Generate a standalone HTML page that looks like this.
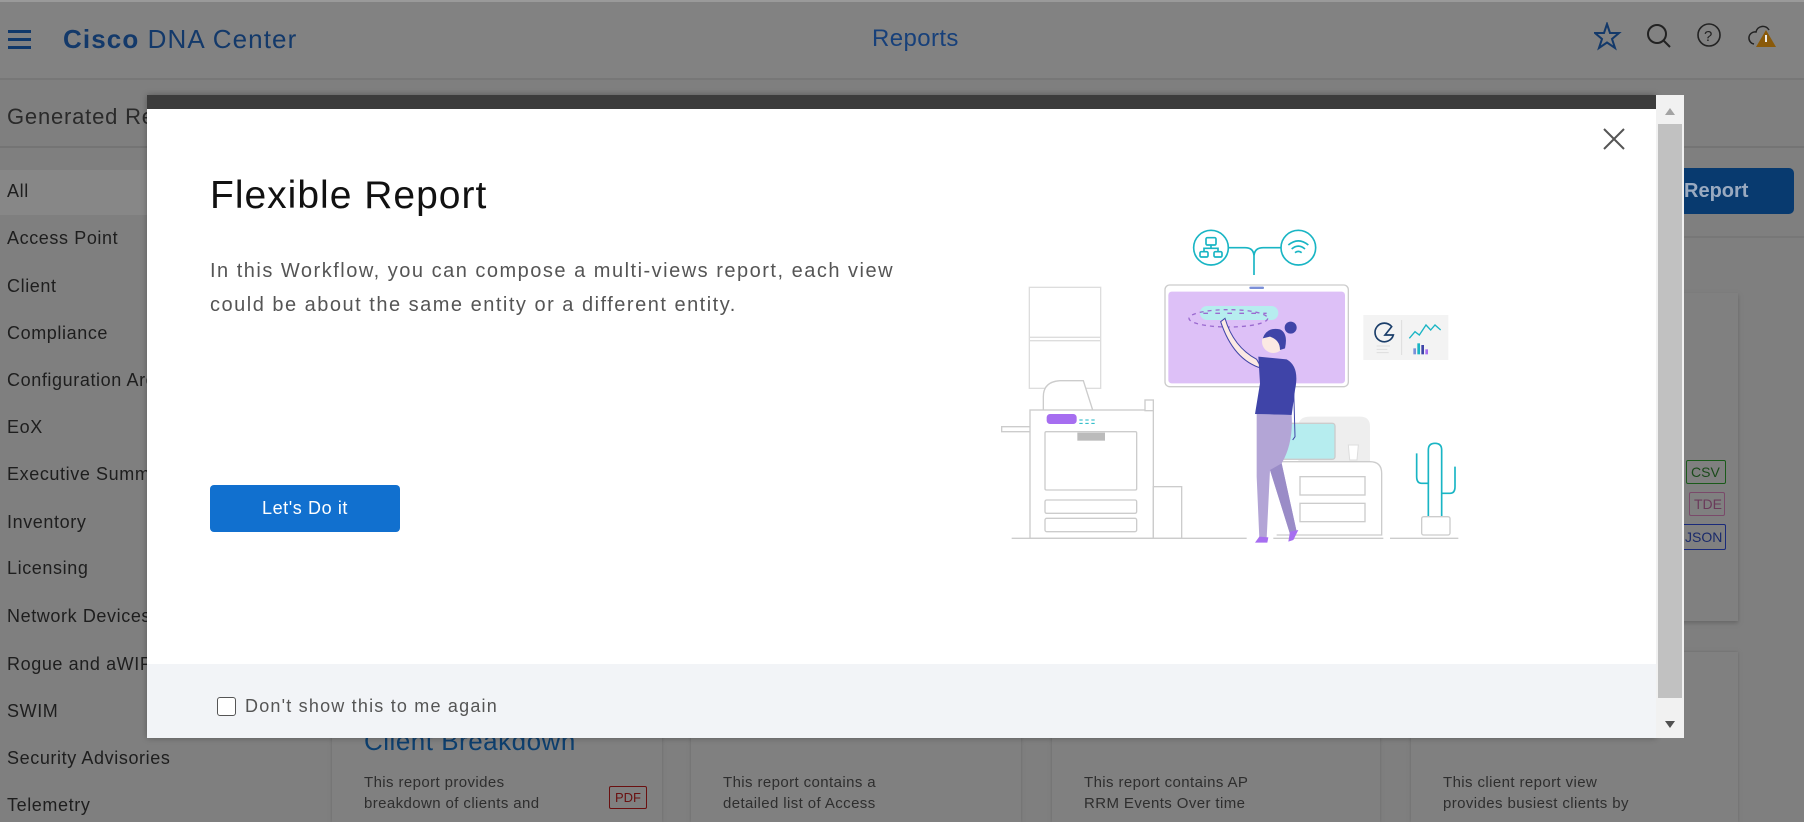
<!DOCTYPE html>
<html><head><meta charset="utf-8"><style>
*{margin:0;padding:0;box-sizing:border-box}
body{width:1804px;height:817px;overflow:hidden;background:#7f7f7f;font-family:"Liberation Sans",sans-serif;position:relative}
.a{position:absolute;white-space:nowrap}
.side{color:#1e1e1e;font-size:18px;left:7px;letter-spacing:0.6px}
</style></head><body>
<div class="a" style="left:0;top:0;width:1804px;height:2px;background:#9a9a9a"></div>
<div class="a" style="left:0;top:2px;width:1804px;height:78px;background:#828282;border-bottom:2px solid #777"></div>
<div class="a" style="left:8px;top:30px;width:23px;height:3px;background:#10386a;box-shadow:0 8px 0 #10386a,0 16px 0 #10386a"></div>
<div class="a" style="left:63px;top:24px;font-size:26px;color:#13396a;letter-spacing:1.1px"><b>Cisco</b> DNA Center</div>
<div class="a" style="left:872px;top:25px;font-size:24px;color:#17407a;letter-spacing:0.4px">Reports</div>
<svg class="a" style="left:1594px;top:22px" width="200" height="30" viewBox="0 0 200 30">
<path d="M13 2 L16 11 L25 11 L18 17 L21 26 L13 20.5 L5 26 L8 17 L1 11 L10 11Z" fill="none" stroke="#13396a" stroke-width="2"/>
<circle cx="63" cy="12" r="9" fill="none" stroke="#222" stroke-width="2"/><path d="M69 18 L76 25" stroke="#222" stroke-width="2"/>
<circle cx="115" cy="13" r="11" fill="none" stroke="#222" stroke-width="1.6"/><text x="110" y="19" font-size="15" fill="#222" font-family="Liberation Sans">?</text>
<path d="M160 22 a6 6 0 0 1 2-12 a7 7 0 0 1 13-2" fill="none" stroke="#222" stroke-width="1.5"/>
<path d="M172 8 L182 25 L162 25Z" fill="#8a5a0a"/><rect x="171" y="13" width="2" height="7" fill="#eee"/>
</svg>
<div class="a" style="left:7px;top:104px;font-size:22px;color:#2a2a2a;letter-spacing:0.8px">Generated Reports</div>
<div class="a" style="left:0;top:146px;width:1804px;height:2px;background:#747474"></div>
<div class="a" style="left:0;top:170px;width:332px;height:45px;background:#878787"></div>
<div class="a side" style="top:181px">All</div>
<div class="a side" style="top:228px">Access Point</div>
<div class="a side" style="top:276px">Client</div>
<div class="a side" style="top:323px">Compliance</div>
<div class="a side" style="top:370px">Configuration Archive</div>
<div class="a side" style="top:417px">EoX</div>
<div class="a side" style="top:464px">Executive Summary</div>
<div class="a side" style="top:512px">Inventory</div>
<div class="a side" style="top:558px">Licensing</div>
<div class="a side" style="top:606px">Network Devices</div>
<div class="a side" style="top:654px">Rogue and aWIPS</div>
<div class="a side" style="top:701px">SWIM</div>
<div class="a side" style="top:748px">Security Advisories</div>
<div class="a side" style="top:795px">Telemetry</div>
<div class="a" style="left:1640px;top:168px;width:154px;height:46px;background:#083a6f;border-radius:5px;color:#9aaac0;font-size:20px;font-weight:bold;padding:12px 0 0 44px">Report</div>
<div class="a" style="left:1640px;top:236px;width:164px;height:2px;background:#777"></div>
<div class="a" style="left:1600px;top:293px;width:138px;height:328px;background:#808080;box-shadow:0 2px 4px #666"></div>
<div class="a" style="left:1686px;top:460px;width:40px;height:24px;border:1px solid #1a5a1a;color:#1a4a1a;font-size:14px;padding:3px 4px;border-radius:2px">CSV</div>
<div class="a" style="left:1689px;top:492px;width:36px;height:24px;border:1px solid #7a4a6a;color:#6a3a5a;font-size:14px;padding:3px 4px;border-radius:2px">TDE</div>
<div class="a" style="left:1670px;top:524px;width:56px;height:26px;border:1px solid #1a2a7a;color:#1a2a6a;font-size:14px;padding:4px 14px;border-radius:2px">JSON</div>
<div class="a" style="left:332px;top:652px;width:330px;height:170px;background:#808080;box-shadow:0 0 3px #6a6a6a"></div>
<div class="a" style="left:691px;top:652px;width:330px;height:170px;background:#808080;box-shadow:0 0 3px #6a6a6a"></div>
<div class="a" style="left:1052px;top:652px;width:328px;height:170px;background:#808080;box-shadow:0 0 3px #6a6a6a"></div>
<div class="a" style="left:1411px;top:652px;width:327px;height:170px;background:#808080;box-shadow:0 0 3px #6a6a6a"></div>
<div class="a" style="left:364px;top:726px;font-size:26px;color:#0d3f6e;letter-spacing:0.5px">Client Breakdown</div>
<div class="a" style="left:364px;top:772px;font-size:15px;color:#2e2e2e;line-height:21px;letter-spacing:0.4px">This report provides<br>breakdown of clients and</div>
<div class="a" style="left:609px;top:786px;border:1px solid #6a1010;color:#6a1010;font-size:13px;padding:3px 5px;border-radius:2px">PDF</div>
<div class="a" style="left:723px;top:772px;font-size:15px;color:#2e2e2e;line-height:21px;letter-spacing:0.4px">This report contains a<br>detailed list of Access</div>
<div class="a" style="left:1084px;top:772px;font-size:15px;color:#2e2e2e;line-height:21px;letter-spacing:0.4px">This report contains AP<br>RRM Events Over time</div>
<div class="a" style="left:1443px;top:772px;font-size:15px;color:#2e2e2e;line-height:21px;letter-spacing:0.4px">This client report view<br>provides busiest clients by</div>

<!-- modal -->
<div class="a" style="left:147px;top:95px;width:1509px;height:643px;background:#fff;box-shadow:0 0 6px rgba(0,0,0,.3)"></div>
<div class="a" style="left:147px;top:95px;width:1509px;height:14px;background:#3c3c3c"></div>
<div class="a" style="left:1656px;top:95px;width:28px;height:643px;background:#f1f1f1"></div>
<div class="a" style="left:1658px;top:124px;width:24px;height:574px;background:#c1c1c1"></div>
<svg class="a" style="left:1656px;top:100px" width="28" height="638"><path d="M9 15 L19 15 L14 8Z" fill="#a3a3a3"/><path d="M9 621 L19 621 L14 628Z" fill="#505050"/></svg>
<div class="a" style="left:147px;top:664px;width:1509px;height:74px;background:#f2f4f7"></div>
<svg class="a" style="left:1603px;top:128px" width="22" height="22"><path d="M1 1 L21 21 M21 1 L1 21" stroke="#555" stroke-width="2"/></svg>
<div class="a" style="left:210px;top:174px;font-size:39px;color:#111;letter-spacing:1px">Flexible Report</div>
<div class="a" style="left:210px;top:254px;font-size:20px;color:#555;line-height:34px;letter-spacing:1.5px">In this Workflow, you can compose a multi-views report, each view<br>could be about the same entity or a different entity.</div>
<div class="a" style="left:210px;top:485px;width:190px;height:47px;background:#1170cf;border-radius:4px;color:#fff;font-size:18px;text-align:center;line-height:47px;letter-spacing:0.6px">Let's Do it</div>
<div class="a" style="left:217px;top:697px;width:19px;height:19px;border:1.5px solid #555;border-radius:3px;background:#fff"></div>
<div class="a" style="left:245px;top:696px;font-size:18px;color:#555;letter-spacing:1.2px">Don't show this to me again</div>

<svg class="a" style="left:980px;top:210px" width="500" height="340" viewBox="0 0 1500 1020">
<g fill="none" stroke="#19b5c4" stroke-width="5">
<circle cx="693" cy="113" r="52"/><circle cx="955" cy="113" r="52"/>
<path d="M745 113 H795 Q822 113 822 140 V195 M903 113 H850 Q822 113 822 140"/>
<rect x="678" y="83" width="30" height="22" rx="4"/><rect x="660" y="125" width="24" height="16" rx="4"/><rect x="702" y="125" width="24" height="16" rx="4"/><path d="M693 105 V115 H672 V125 M693 115 H714 V125"/>
<path d="M925 105 Q955 80 985 105 M935 117 Q955 100 975 117 M945 128 Q955 120 965 128"/>
</g>
<rect x="148" y="232" width="214" height="303" fill="none" stroke="#ddd" stroke-width="4"/>
<path d="M150 382 H360 M150 392 H360" stroke="#ddd" stroke-width="4"/>
<rect x="555" y="225" width="550" height="305" rx="14" fill="#fff" stroke="#ccc" stroke-width="4"/>
<rect x="565" y="245" width="530" height="275" rx="10" fill="#ddc0f7"/>
<rect x="808" y="230" width="44" height="7" rx="3" fill="#7b8fd8"/>
<rect x="660" y="288" width="235" height="42" rx="21" fill="#b6edef"/>
<path d="M670 310 H860" stroke="#9b6ad0" stroke-width="4" stroke-dasharray="14 22"/>
<ellipse cx="745" cy="325" rx="118" ry="26" fill="none" stroke="#9b6ad0" stroke-width="4" stroke-dasharray="12 12"/>
<rect x="1150" y="315" width="255" height="135" fill="#f3f3f3"/>
<path d="M1235 350 a28 28 0 1 0 5 25 h-25 z" fill="none" stroke="#1b3e6a" stroke-width="5"/>
<path d="M1265 330 V435" stroke="#ddd" stroke-width="3"/>
<path d="M1288 385 L1305 365 L1318 375 L1338 345 L1352 360 L1365 345 L1382 360" fill="none" stroke="#19b5c4" stroke-width="4"/>
<rect x="1300" y="415" width="8" height="18" fill="#7b8fd8"/><rect x="1312" y="400" width="8" height="33" fill="#19b5c4"/><rect x="1324" y="405" width="8" height="28" fill="#3f44a8"/><rect x="1336" y="418" width="8" height="15" fill="#a66ef0"/>
<path d="M1190 408 H1230 M1190 418 H1222 M1190 428 H1226" stroke="#ddd" stroke-width="3"/>
<g fill="#fff" stroke="#ccc" stroke-width="4">
<path d="M190 600 V560 Q190 515 240 512 H310 L338 600"/>
<path d="M65 650 H152 V665 H65 Z"/>
<rect x="150" y="600" width="370" height="385"/>
<rect x="495" y="570" width="25" height="32"/>
<rect x="195" y="665" width="275" height="175" rx="4"/>
<rect x="195" y="870" width="275" height="40" rx="5"/><rect x="195" y="925" width="275" height="40" rx="5"/>
<rect x="520" y="830" width="85" height="155"/>
</g>
<rect x="292" y="668" width="83" height="24" fill="#bbb"/>
<rect x="200" y="612" width="90" height="30" rx="10" fill="#a66ef0"/>
<path d="M298 630 h10 M316 630 h10 M334 630 h10 M298 640 h10 M316 640 h10 M334 640 h10" stroke="#19b5c4" stroke-width="3"/>
<path d="M955 760 V650 Q955 620 990 620 H1140 Q1170 620 1170 650 V760Z" fill="#eee"/>
<rect x="905" y="640" width="160" height="108" rx="8" fill="#b6edef" stroke="#ccc" stroke-width="4"/>
<path d="M1105 705 h30 l-4 45 h-22z" fill="#fff" stroke="#ddd" stroke-width="3"/>
<path d="M890 755 H1170 Q1205 755 1205 790 V975 H890" fill="#fff" stroke="#ccc" stroke-width="4"/>
<rect x="960" y="800" width="195" height="55" fill="#fff" stroke="#ccc" stroke-width="4"/><rect x="960" y="880" width="195" height="55" fill="#fff" stroke="#ccc" stroke-width="4"/>
<path d="M95 985 H800 M880 985 H1210 M1230 985 H1435" stroke="#ccc" stroke-width="4"/>
<g fill="none" stroke="#19b5c4" stroke-width="5">
<path d="M1345 920 V720 Q1345 700 1365 700 Q1385 700 1385 720 V920"/>
<path d="M1345 820 H1325 Q1310 820 1310 800 V730 M1385 850 H1410 Q1425 850 1425 830 V770"/>
</g>
<rect x="1325" y="920" width="85" height="55" rx="6" fill="#fff" stroke="#ccc" stroke-width="4"/>
<path d="M830 612 L935 615 Q940 700 905 760 L950 965 L930 972 L870 780 L860 985 L838 985 L830 800Z" fill="#b3a5d6"/>
<path d="M870 780 L905 760 L950 965 L930 972Z" fill="#9a8cc7"/>
<path d="M838 980 L865 982 L862 998 L825 998Z" fill="#a66ef0"/><path d="M930 965 L955 960 L940 990 L925 995Z" fill="#a66ef0"/>
<path d="M735 325 Q760 410 830 448 L845 475 Q760 450 722 335Z" fill="#fbe9e3" stroke="#3f44a8" stroke-width="3"/>
<path d="M835 440 L920 448 Q960 470 945 540 L935 615 L825 612 L840 520Z" fill="#3f44a8"/>
<path d="M940 500 L945 680 L938 690" fill="none" stroke="#3f44a8" stroke-width="3"/>
<circle cx="880" cy="395" r="34" fill="#fbe9e3"/>
<path d="M848 385 Q860 350 900 358 Q925 370 915 415 L900 420 Q900 390 870 380Z" fill="#3f44a8"/>
<circle cx="932" cy="353" r="18" fill="#3f44a8"/>
</svg>
</body></html>
